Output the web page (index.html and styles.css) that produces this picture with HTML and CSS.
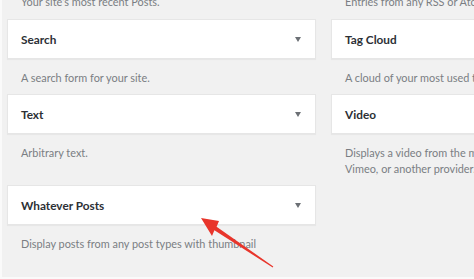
FILE: index.html
```html
<!DOCTYPE html>
<html lang="en">
<head>
<meta charset="utf-8">
<title>Widgets</title>
<link rel="stylesheet" href="styles.css">
</head>
<body>
<div class="widgets">
  <div class="grid">
    <div class="cell"><p class="desc first">Your site’s most recent Posts.</p></div>
    <div class="cell"><p class="desc first">Entries from any RSS or Atom feed.</p></div>

    <div class="cell">
      <div class="widget-top"><span class="title">Search</span><span class="caret"></span></div>
      <p class="desc">A search form for your site.</p>
    </div>
    <div class="cell">
      <div class="widget-top"><span class="title">Tag Cloud</span><span class="caret"></span></div>
      <p class="desc">A cloud of your most used tags.</p>
    </div>

    <div class="cell">
      <div class="widget-top"><span class="title">Text</span><span class="caret"></span></div>
      <p class="desc">Arbitrary text.</p>
    </div>
    <div class="cell">
      <div class="widget-top"><span class="title">Video</span><span class="caret"></span></div>
      <p class="desc">Displays a video from the media library or from YouTube,<br>Vimeo, or another provider.</p>
    </div>

    <div class="cell">
      <div class="widget-top"><span class="title">Whatever Posts</span><span class="caret"></span></div>
      <p class="desc">Display posts from any post types with thumbnail</p>
    </div>
    <div class="cell"></div>
  </div>
</div>
<svg class="pointer" width="474" height="279" viewBox="0 0 474 279" aria-hidden="true">
  <polygon points="201,218 219,221 216.6,226.8 273.3,266.6 272.7,267.4 214.4,230.2 212,236" fill="#e8352b"/>
</svg>
</body>
</html>
```

FILE: styles.css
```css
html, body {
  margin: 0;
  padding: 0;
  overflow: hidden;
}
body {
  position: relative;
  width: 474px;
  height: 279px;
  background: #fafafa;
  font-family: Lato, "Open Sans", "DejaVu Sans", sans-serif;
}
.widgets {
  margin-left: 2px;
  background: #f1f1f1;
  padding: 0 0 17px 5px;
  overflow: hidden;
}
.grid {
  display: grid;
  grid-template-columns: 309px 309px;
  column-gap: 15px;
  margin-top: -6px;
}
.widget-top {
  box-sizing: border-box;
  height: 40px;
  background: #fff;
  border: 1px solid #e6e6e6;
  box-shadow: 0 1px 1px rgba(0, 0, 0, 0.04);
  display: flex;
  align-items: center;
  justify-content: space-between;
  padding: 0 14px 0 13px;
}
.title {
  font-size: 11.8px;
  font-weight: 700;
  color: #2c3035;
}
.caret {
  width: 0;
  height: 0;
  border-left: 3.5px solid transparent;
  border-right: 3.5px solid transparent;
  border-top: 5px solid #6c7075;
}
.desc {
  margin: 0;
  padding: 11px 14px 8px;
  font-size: 10.9px;
  line-height: 16px;
  color: #7a7e83;
  white-space: nowrap;
}
.desc.first {
  padding-top: 0;
  padding-bottom: 9px;
}
.pointer {
  position: absolute;
  left: 0;
  top: 0;
  pointer-events: none;
}
```
